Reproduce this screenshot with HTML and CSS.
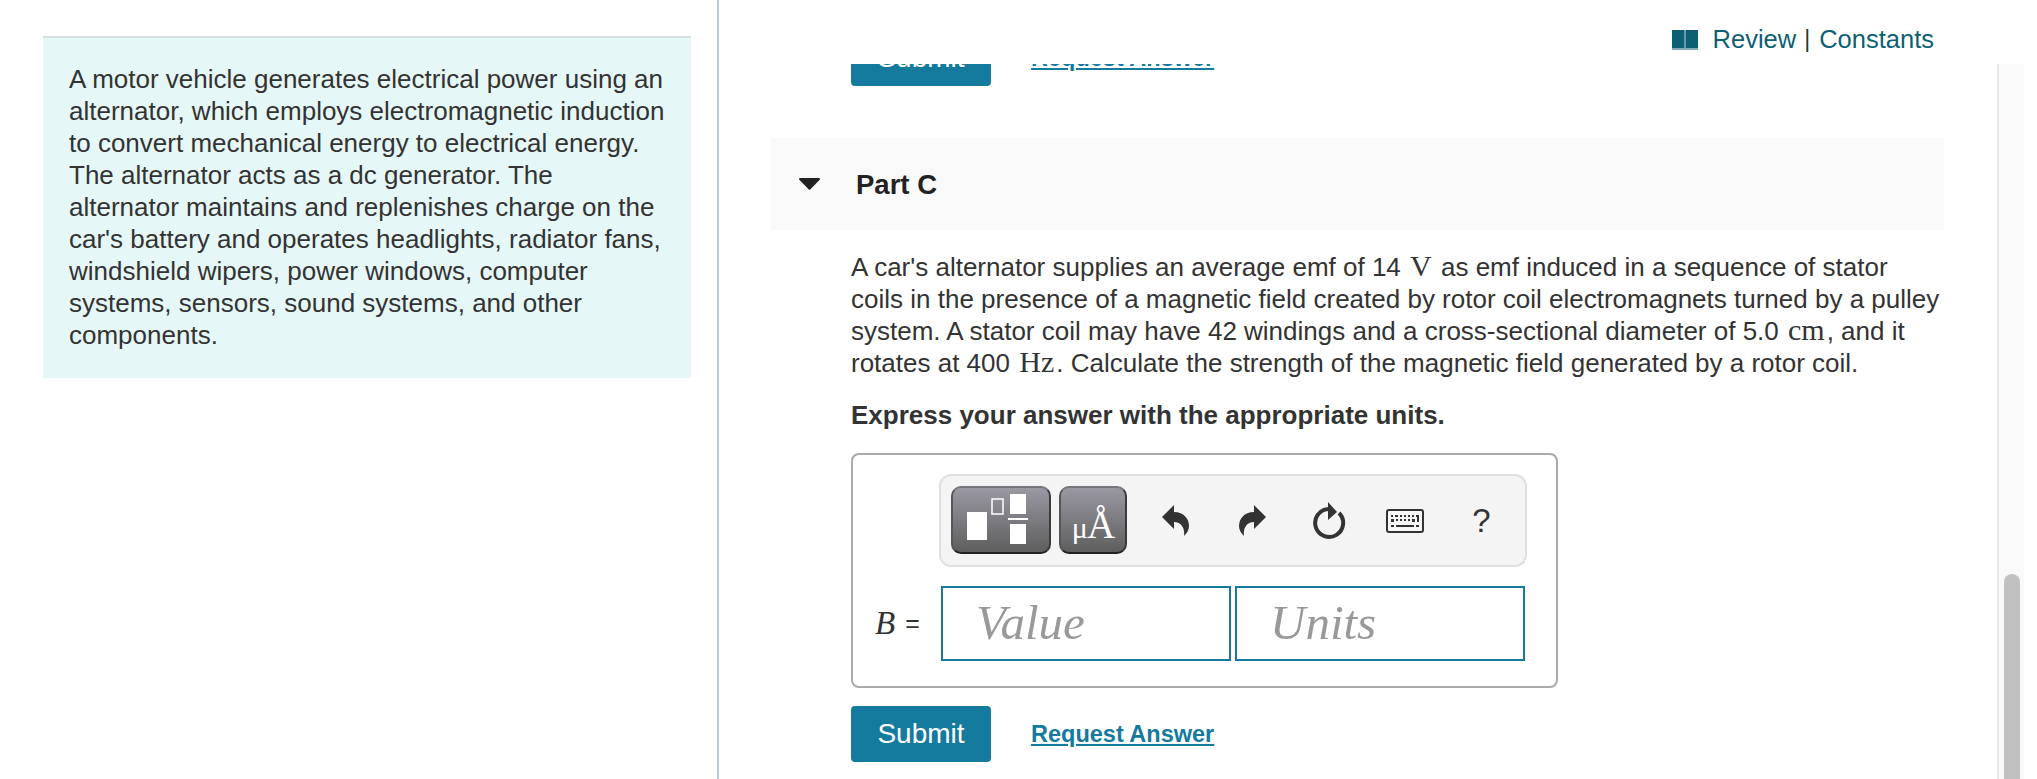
FILE: index.html
```html
<!DOCTYPE html>
<html lang="en">
<head>
<meta charset="utf-8">
<title>Part C</title>
<link rel="stylesheet" href="styles.css">
</head>
<body>
<div class="page">
  <aside class="left">
    <div class="intro">A motor vehicle generates electrical power using an alternator, which employs electromagnetic induction to convert mechanical energy to electrical energy. The alternator acts as a dc generator. The alternator maintains and replenishes charge on the car's battery and operates headlights, radiator fans, windshield wipers, power windows, computer systems, sensors, sound systems, and other components.</div>
  </aside>
  <main class="right">
    <header class="top">
      <svg class="book" viewBox="0 0 26 21" width="26" height="21"><path d="M0 1h12l1 1 1-1h12v18.500H0z"/><path class="book-base" d="M12.200 2h1.600v17.500h-1.600zM0 19.500h26V21H0z"/></svg>
      <a class="toplink">Review</a><span class="sep">|</span><a class="toplink">Constants</a>
    </header>
    <div class="scrollrow">
      <div class="content">
        <div class="actions actions-top">
          <button class="submit">Submit</button><a class="request">Request Answer</a>
        </div>
        <section class="part">
          <svg class="caret" viewBox="0 0 21 12" width="21" height="12"><path d="M1 0h19a1 1 0 0 1 .7 1.700L11.200 11.600a1 1 0 0 1-1.400 0L.3 1.700A1 1 0 0 1 1 0z"/></svg>
          <h2 class="part-title">Part C</h2>
        </section>
        <div class="body">
          <p class="question">A car's alternator supplies an average emf of 14 <span class="math">V</span> as emf induced in a sequence of stator coils in the presence of a magnetic field created by rotor coil electromagnets turned by a pulley system. A stator coil may have 42 windings and a cross-sectional diameter of 5.0 <span class="math">cm</span>, and it rotates at 400 <span class="math">Hz</span>. Calculate the strength of the magnetic field generated by a rotor coil.</p>
          <p class="instruction">Express your answer with the appropriate units.</p>
          <div class="answer">
            <div class="toolbar">
              <button class="tool tool-wide" aria-label="templates">
                <svg viewBox="0 0 96 64" width="96" height="64">
                  <rect class="w" x="14" y="24" width="20" height="28"/>
                  <rect class="o" x="39" y="11" width="11" height="15"/>
                  <rect class="w" x="57" y="6" width="16" height="20"/>
                  <rect class="w" x="55" y="30" width="20" height="2"/>
                  <rect class="w" x="57" y="36" width="16" height="20"/>
                </svg>
              </button>
              <button class="tool tool-unit"><span class="mu">μ</span>Å</button>
              <div class="icons">
                <svg class="ic ic-undo" viewBox="0 0 27 31" width="27" height="31"><path d="M0 12 12 0v7c10 0 15 7 15 14 0 4-2 7-5 10 1-7-2-14-10-14v7z"/></svg>
                <svg class="ic ic-redo" viewBox="0 0 27 31" width="27" height="31"><path d="M27 12 15 0v7C5 7 0 14 0 21c0 4 2 7 5 10-1-7 2-14 10-14v7z"/></svg>
                <svg class="ic ic-reset" viewBox="0 0 36 38" width="36" height="38"><path class="ring" d="M17 7A14 14 0 1 0 28 11"/><path d="M17 0l9 10-9 8z"/></svg>
                <svg class="ic ic-keys" viewBox="0 0 38 24" width="38" height="24">
                  <rect class="kb" x="1" y="1" width="36" height="22" rx="2"/>
                  <path d="M5 6h2v2H5zM9 6h3v2H9zM14 6h2v2h-2zM18 6h2v2h-2zM22 6h2v2h-2zM26 6h2v2h-2zM30 6h3v7h-2V8h-1zM5 10h3v3H5zM10 10h2v2h-2zM14 10h2v2h-2zM18 10h2v2h-2zM22 10h2v2h-2zM26 10h3v3h-3zM5 16h3v2H5zM10 16h18v2H10zM30 16h3v2h-3z"/>
                </svg>
                <span class="help">?</span>
              </div>
            </div>
            <div class="inputs">
              <div class="label"><i>B</i><span class="eq">=</span></div>
              <div class="field field-value">Value</div>
              <div class="field field-units">Units</div>
            </div>
          </div>
          <div class="actions">
            <button class="submit">Submit</button><a class="request">Request Answer</a>
          </div>
        </div>
      </div>
      <div class="track"><div class="thumb"></div></div>
    </div>
  </main>
</div>
</body>
</html>
```
FILE: styles.css
```css
* { box-sizing: border-box; }
html, body { margin: 0; height: 100%; background: #fff; }
body { font-family: "Liberation Sans", Arial, sans-serif; color: #333; font-size: 26px; }
.page { display: flex; height: 779px; overflow: hidden; }

.left { width: 717px; flex: none; padding: 36px 26px 0 43px; }
.intro {
  background: #e6f7f7;
  border-top: 2px solid #dcdfe0;
  padding: 25px 26px 27px;
  line-height: 32px;
}

.right { flex: 1; min-width: 0; display: flex; flex-direction: column; border-left: 2px solid #bccde0; }
.top { height: 64px; flex: none; display: flex; align-items: center; padding: 14px 103px 0 0; justify-content: flex-end; font-size: 25.500px; }
.book { fill: #0d5f73; margin-right: 15px; }
.book-base { fill: #7fa9b5; }
.toplink { color: #0d5f73; }
.sep { margin: 0 9px 0 8px; color: #333; font-size: 23px; }

.scrollrow { flex: 1; min-height: 0; display: flex; overflow: hidden; }
.content { width: 1278px; flex: none; margin-top: -34px; padding-left: 52px; padding-right: 53px; }
.actions { display: flex; align-items: center; margin-left: 80px; height: 56px; }
.submit {
  width: 140px; height: 56px; border: 0; border-radius: 4px;
  background: #147a9e; color: #fff;
  font: 28px "Liberation Sans", Arial, sans-serif;
  padding: 0;
}
.request { margin-left: 40px; color: #147a9e; font-weight: 700; font-size: 23.500px; text-decoration: underline; }

.part { margin-top: 52px; height: 92px; background: #f9f9f9; display: flex; align-items: center; }
.caret { margin-left: 28px; fill: #222; }
.part-title { margin: 0 0 0 36px; padding-top: 2px; font-size: 27.500px; font-weight: 700; color: #222; }

.body { padding-left: 80px; }
.question { margin: 21px 0 0; width: 1089px; line-height: 32px; }
.math { font-family: "Liberation Serif", serif; font-size: 30px; line-height: 1; padding: 0 2px; }
.instruction { margin: 20px 0 0; font-weight: 700; line-height: 32px; }

.answer { margin-top: 22px; width: 707px; height: 235px; border: 2px solid #aaa; border-radius: 8px; padding: 19px 28px 0 86px; }
.toolbar {
  height: 93px; width: 588px; background: #f4f4f4; border: 2px solid #e0e0e0; border-radius: 12px;
  padding: 10px 10px; display: flex; gap: 8px;
}
.tool {
  height: 68px; padding: 0; color: #fff; border: 2px solid #3a3a3a; border-top-color: #77767d; border-left-color: #55555a; border-right-color: #3a3a3a;
  border-bottom-color: #222; border-radius: 10px; background: linear-gradient(#9a99a3, #5e5e5e);
}
.tool-wide { width: 100px; }
.tool-wide svg { display: block; margin: 0; }
.w { fill: #fff; }
.o { fill: none; stroke: #fff; stroke-width: 1.500px; }
.tool-unit { width: 68px; padding-top: 8px; font: 39px/1 "Liberation Serif", serif; white-space: nowrap; letter-spacing: -1px; }
.mu { font-size: 30px; }
.icons { flex: 1; display: flex; align-items: center; margin-left: 27px; }
.ic { fill: #333; flex: none; }
.ic-redo { margin-left: 50px; }
.ic-reset { margin-left: 45px; }
.ic-keys { margin-left: 39px; }
.ring { fill: none; stroke: #333; stroke-width: 4px; }
.kb { fill: #f8f8f8; stroke: #333; stroke-width: 2px; }
.help { margin-left: 48px; font-size: 33px; color: #333; width: 19px; text-align: center; }

.inputs { display: flex; margin-top: 19px; align-items: stretch; margin-left: -86px; }
.label { width: 88px; display: flex; align-items: center; padding-left: 22px; }
.label i { font: italic 33px "Liberation Serif", serif; color: #333; }
.eq { font-size: 25px; margin-left: 10px; }
.field {
  height: 75px; width: 290px; border: 2px solid #147a9e; background: #fff;
  font: italic 49px/69px "Liberation Serif", serif; color: #999; padding-left: 33px;
}
.field-units { margin-left: 4px; }

.body > .actions { margin: 18px 0 0; }

.track { width: 27px; flex: none; background: #fafafa; border-left: 2px solid #e8e8e8; padding: 510px 4px 0 5px; }
.thumb { height: 300px; background: #c1c1c1; border-radius: 8px; }
```
